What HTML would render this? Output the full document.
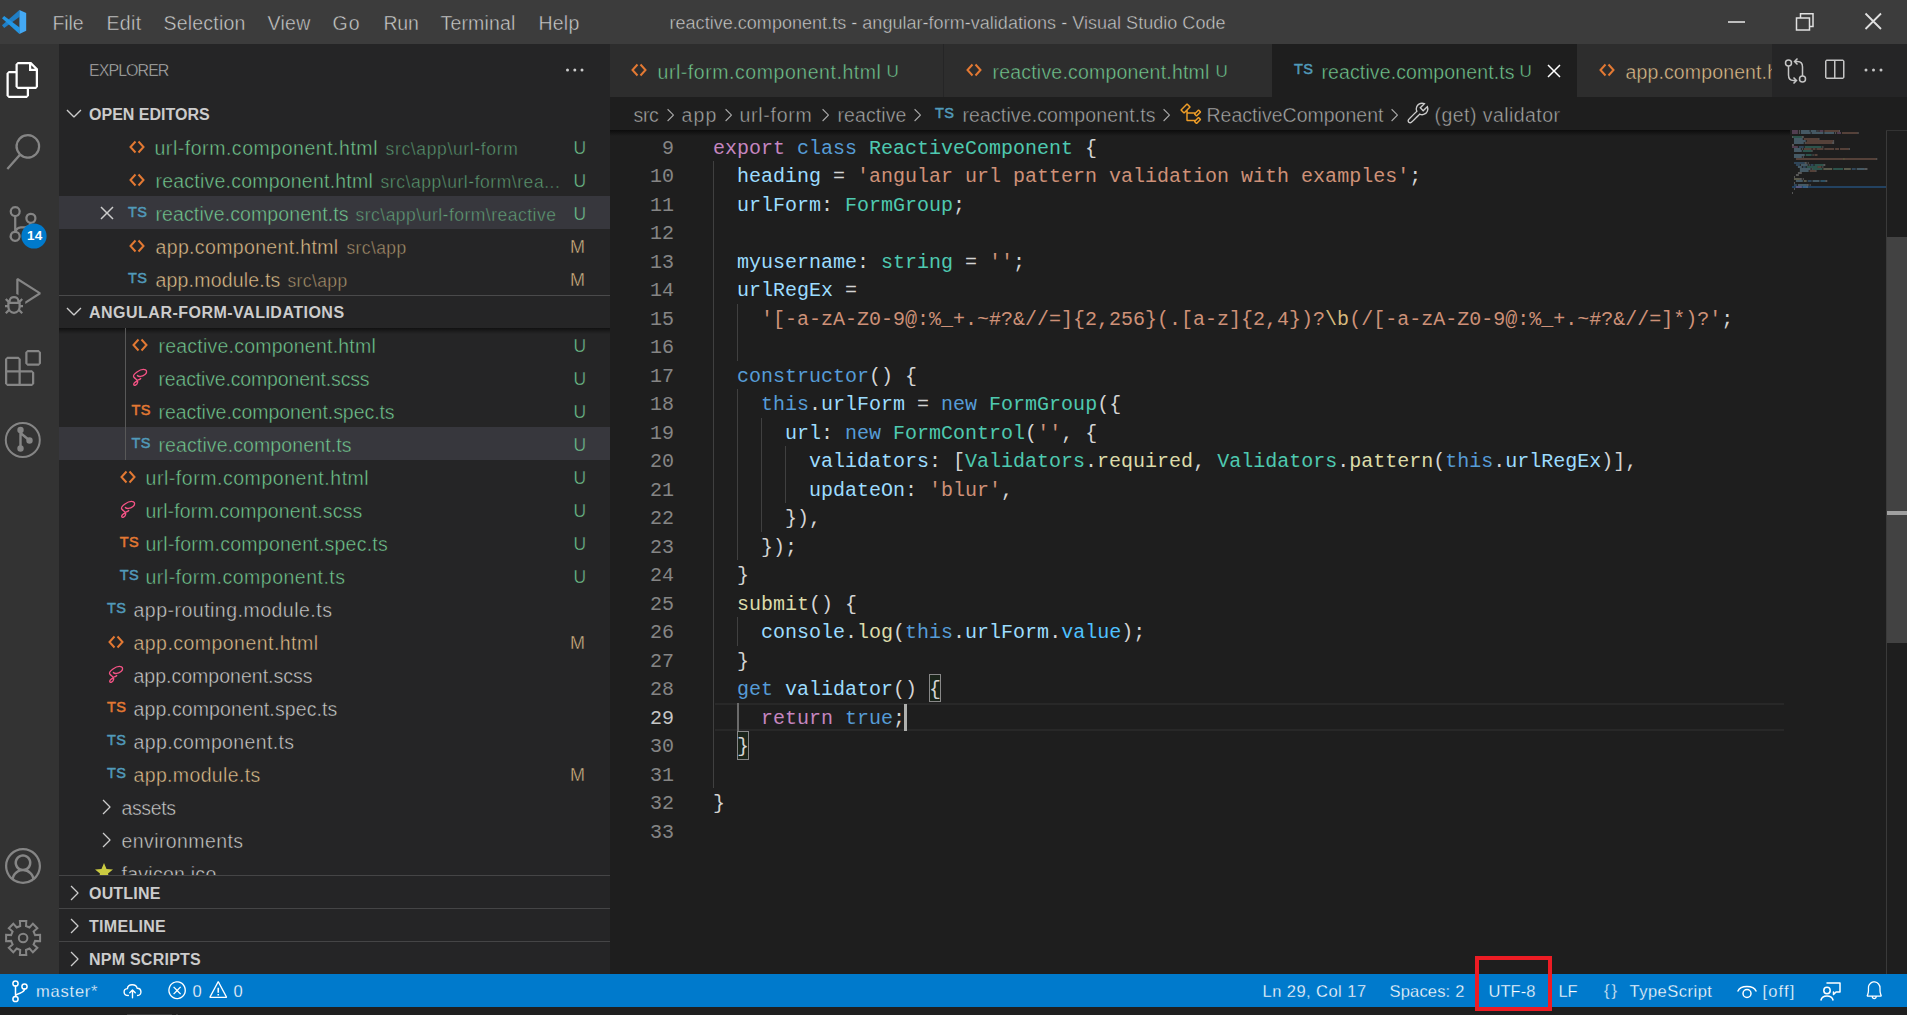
<!DOCTYPE html>
<html lang="en"><head><meta charset="utf-8"><title>reactive.component.ts - angular-form-validations - Visual Studio Code</title>
<style>
*{box-sizing:border-box;margin:0;padding:0}
html,body{width:1907px;height:1015px;overflow:hidden;background:#1e1e1e}
body{position:relative;font-family:"Liberation Sans",sans-serif;color:#ccc}
.abs{position:absolute}
.t{position:absolute;white-space:nowrap;display:block}
.code{position:absolute;left:713px;white-space:pre;font-family:"Liberation Mono",monospace;font-size:20px;line-height:28.5px;height:28.5px;color:#d4d4d4}
.ln{position:absolute;left:610px;width:64px;text-align:right;font-family:"Liberation Mono",monospace;font-size:20px;line-height:28.5px;height:28.5px;color:#858585}
.kc{color:#c586c0}.k{color:#569cd6}.c{color:#4ec9b0}.v{color:#9cdcfe}.f{color:#dcdcaa}.s{color:#ce9178}.e{color:#d7ba7d}.o{color:#4fc1ff}
.g{position:absolute;width:1px;background:#404040}
svg{position:absolute;overflow:visible}
</style></head><body>
<div class="abs" style="left:0px;top:0px;width:1907px;height:44px;background:#3c3c3c;"></div>
<div class="abs" style="left:0px;top:44px;width:59px;height:930px;background:#333333;"></div>
<div class="abs" style="left:59px;top:44px;width:551px;height:930px;background:#252526;"></div>
<div class="abs" style="left:610px;top:44px;width:1297px;height:53px;background:#252526;"></div>
<div class="abs" style="left:610px;top:97px;width:1297px;height:877px;background:#1e1e1e;"></div>
<div class="abs" style="left:0px;top:974px;width:1907px;height:33px;background:#007acc;"></div>
<div class="abs" style="left:0px;top:1007px;width:1907px;height:8px;background:#1f1f1f;"></div>
<svg style="left:2px;top:10px" width="24.200" height="24" viewBox="0 0 100 100" preserveAspectRatio="none">
<path d="M0 64 L72 0 L73 28 L9 75.500 Z" fill="#1f7ec6"/>
<path d="M0 34 L9 24.500 L73 72.500 L72 100 Z" fill="#2396e4"/>
<path d="M72 0 L100 13 V86 L72 100 Z" fill="#44a9f5"/>
</svg>
<span class="t" style="left:52.5px;top:10.7px;font-size:19.5px;line-height:25px;color:#cccccc;letter-spacing:-0.11px;-webkit-text-stroke:0.45px #3c3c3c;">File</span>
<span class="t" style="left:106.5px;top:10.7px;font-size:19.5px;line-height:25px;color:#cccccc;letter-spacing:0.35px;-webkit-text-stroke:0.45px #3c3c3c;">Edit</span>
<span class="t" style="left:163.5px;top:10.7px;font-size:19.5px;line-height:25px;color:#cccccc;letter-spacing:0.20px;-webkit-text-stroke:0.45px #3c3c3c;">Selection</span>
<span class="t" style="left:267.5px;top:10.7px;font-size:19.5px;line-height:25px;color:#cccccc;letter-spacing:0.27px;-webkit-text-stroke:0.45px #3c3c3c;">View</span>
<span class="t" style="left:332.5px;top:10.7px;font-size:19.5px;line-height:25px;color:#cccccc;letter-spacing:0.99px;-webkit-text-stroke:0.45px #3c3c3c;">Go</span>
<span class="t" style="left:383.5px;top:10.7px;font-size:19.5px;line-height:25px;color:#cccccc;letter-spacing:-0.26px;-webkit-text-stroke:0.45px #3c3c3c;">Run</span>
<span class="t" style="left:440.5px;top:10.7px;font-size:19.5px;line-height:25px;color:#cccccc;letter-spacing:0.16px;-webkit-text-stroke:0.45px #3c3c3c;">Terminal</span>
<span class="t" style="left:538.5px;top:10.7px;font-size:19.5px;line-height:25px;color:#cccccc;letter-spacing:0.22px;-webkit-text-stroke:0.45px #3c3c3c;">Help</span>
<span class="t" style="left:669.5px;top:11.5px;font-size:18px;line-height:23px;color:#cccccc;letter-spacing:0.03px;-webkit-text-stroke:0.45px #3c3c3c;">reactive.component.ts - angular-form-validations - Visual Studio Code</span>
<svg style="left:1720px;top:8px" width="170" height="30" viewBox="0 0 170 30" fill="none" stroke="#e0e0e0" stroke-width="1.6">
<path d="M8 14 H25"/>
<path d="M76.500 10 H89.500 V22 H76.500 Z M80.500 10 V5.700 H93 V18.500 H89.500" stroke-width="1.500"/>
<path d="M145.500 5.500 L161 21 M161 5.500 L145.500 21" stroke-width="1.8"/>
</svg>
<svg style="left:4.8px;top:61.8px" width="36" height="36" viewBox="0 0 24 24" fill="#ffffff"><path d="M17.500 0h-9L7 1.500V6H2.500L1 7.500v15.070L2.500 24h12.070L16 22.570V18h4.700l1.300-1.430V4.500L17.500 0zm0 2.120l2.380 2.380H17.500V2.120zm-3 20.380h-12v-15H7v9.070L8.500 18h6v4.500zm6-6h-12v-15H16V6h4.500v10.500z"/></svg>
<svg style="left:4.8px;top:134.1px" width="36" height="36" viewBox="0 0 24 24" fill="#858585"><path d="M15.250 0a8.250 8.250 0 0 0-6.180 13.720L1 22.880l1.120 1 8.050-9.120A8.251 8.251 0 1 0 15.250.010V0zm0 15a6.750 6.750 0 1 1 0-13.500 6.750 6.750 0 0 1 0 13.500z"/></svg>
<svg style="left:5.3px;top:205.8px" width="36" height="36" viewBox="0 0 24 24" fill="#858585"><path d="M21.007 8.222A3.738 3.738 0 0 0 15.045 5.200a3.737 3.737 0 0 0 1.156 6.583 2.988 2.988 0 0 1-2.668 1.670h-2.990a4.456 4.456 0 0 0-2.989 1.165V7.400a3.737 3.737 0 1 0-1.494 0v9.117a3.776 3.776 0 1 0 1.816.099 2.990 2.990 0 0 1 2.668-1.667h2.990a4.484 4.484 0 0 0 4.223-3.039 3.736 3.736 0 0 0 3.250-3.687zM4.565 3.738a2.242 2.242 0 1 1 4.484 0 2.242 2.242 0 0 1-4.484 0zm4.484 16.441a2.242 2.242 0 1 1-4.484 0 2.242 2.242 0 0 1 4.484 0zm8.221-9.715a2.242 2.242 0 1 1 0-4.485 2.242 2.242 0 0 1 0 4.485z"/></svg>
<svg style="left:5.3px;top:277.8px" width="36" height="36" viewBox="0 0 24 24" fill="#858585"><path d="M10.940 13.500l-1.320 1.320a3.730 3.730 0 0 0-7.240 0L1.060 13.500 0 14.560l1.720 1.720-.220.220V18H0v1.500h1.500v.080c.077.489.214.966.410 1.420L0 22.940 1.060 24l1.650-1.650A4.308 4.308 0 0 0 6 24a4.310 4.310 0 0 0 3.290-1.650L10.940 24 12 22.940 10.090 21c.198-.464.336-.951.410-1.450v-.100H12V18h-1.500v-1.500l-.220-.220L12 14.560l-1.060-1.060zM6 13.500a2.250 2.250 0 0 1 2.250 2.250h-4.500A2.250 2.250 0 0 1 6 13.500zm3 6a3.330 3.330 0 0 1-3 3 3.330 3.330 0 0 1-3-3v-2.250h6v2.250zm14.760-9.900v1.260L13.500 17.370V15.600l8.500-5.370L9 2v9.460a5.070 5.070 0 0 0-1.500-.720V.630L8.640 0l15.120 9.600z"/></svg>
<svg style="left:5.3px;top:349.8px" width="36" height="36" viewBox="0 0 24 24" fill="#858585"><path d="M13.500 1.500L15 0h7.500L24 1.500V9l-1.500 1.500H15L13.500 9V1.500zm1.500 0V9h7.500V1.500H15zM0 15V6l1.500-1.500H9L10.500 6v7.500H18l1.500 1.500v7.500L18 24H1.500L0 22.500V15zm9-1.500V6H1.500v7.500H9zM9 15H1.500v7.500H9V15zm1.500 7.500H18V15h-7.500v7.500z"/></svg>
<svg style="left:5.2px;top:848px" width="36" height="36" viewBox="0 0 16 16" fill="#858585"><path d="M16 7.992C16 3.580 12.416 0 8 0S0 3.580 0 7.992c0 2.430 1.104 4.620 2.832 6.090.016.016.032.016.032.032.144.112.288.224.448.336.080.048.144.111.224.175A7.980 7.980 0 0 0 8.016 16a7.980 7.980 0 0 0 4.480-1.375c.080-.48.144-.111.224-.160.144-.111.304-.223.448-.335.016-.16.032-.16.032-.032 1.696-1.487 2.800-3.676 2.800-6.106zm-8 7.001c-1.504 0-2.880-.480-4.016-1.279.016-.128.048-.255.080-.383a4.170 4.170 0 0 1 .416-.991c.176-.304.384-.576.640-.816.240-.240.528-.463.816-.639.304-.176.624-.304.976-.400A4.150 4.150 0 0 1 8 10.342a4.185 4.185 0 0 1 2.928 1.166c.368.368.656.800.864 1.295.112.288.192.592.240.911A7.030 7.030 0 0 1 8 14.993zm-2.448-7.400a2.490 2.490 0 0 1-.208-1.024c0-.351.064-.703.208-1.023.144-.320.336-.607.576-.847.240-.240.528-.431.848-.575.320-.144.672-.208 1.024-.208.368 0 .704.064 1.024.208.320.144.608.336.848.575.240.240.432.528.576.847.144.320.208.672.208 1.023 0 .368-.064.704-.208 1.023a2.840 2.840 0 0 1-.576.848 2.840 2.840 0 0 1-.848.575 2.715 2.715 0 0 1-2.064 0 2.840 2.840 0 0 1-.848-.575 2.526 2.526 0 0 1-.560-.848zm7.424 5.306c0-.032-.016-.048-.016-.080a5.220 5.220 0 0 0-.688-1.406 4.883 4.883 0 0 0-1.088-1.135 5.207 5.207 0 0 0-1.040-.608 2.820 2.820 0 0 0 .464-.383 4.200 4.200 0 0 0 .624-.784 3.624 3.624 0 0 0 .528-1.934 3.710 3.710 0 0 0-.288-1.470 3.799 3.799 0 0 0-.816-1.199 3.845 3.845 0 0 0-1.200-.800 3.720 3.720 0 0 0-1.472-.287 3.720 3.720 0 0 0-1.472.288 3.631 3.631 0 0 0-1.200.815 3.840 3.840 0 0 0-.800 1.199 3.710 3.710 0 0 0-.288 1.470c0 .352.048.688.144 1.007.096.336.224.640.400.927.160.288.384.544.624.784.144.144.304.271.480.383a5.120 5.120 0 0 0-1.040.624c-.416.320-.784.703-1.088 1.119a4.999 4.999 0 0 0-.688 1.406c-.16.032-.16.064-.16.080C1.776 11.636.992 9.910.992 7.992.992 4.140 4.144.991 8 .991s7.008 3.149 7.008 7.001a6.960 6.960 0 0 1-2.032 4.907z"/></svg>
<svg style="left:0;top:0" width="59" height="974" viewBox="0 0 59 974" fill="none" stroke-linejoin="round" stroke-linecap="round">
<g stroke="#858585" stroke-width="2">
<circle cx="22.800" cy="440" r="17"/>
<path d="M20.500 430 V448 M20.500 433 L29 440" stroke-width="2.400"/>
<circle cx="23.100" cy="938" r="4.300"/>
<path d="M20.2 926.0 L19.9 921.0 L26.3 921.0 L26.0 926.0 L29.5 927.5 L32.9 923.7 L37.4 928.2 L33.6 931.6 L35.1 935.1 L40.1 934.8 L40.1 941.2 L35.1 940.9 L33.6 944.4 L37.4 947.8 L32.9 952.3 L29.5 948.5 L26.0 950.0 L26.3 955.0 L19.9 955.0 L20.2 950.0 L16.7 948.5 L13.3 952.3 L8.8 947.8 L12.6 944.4 L11.1 940.9 L6.1 941.2 L6.1 934.8 L11.1 935.1 L12.6 931.6 L8.8 928.2 L13.3 923.7 L16.7 927.5 Z" stroke-linejoin="miter"/>
</g>
<g fill="#858585" stroke="none">
<circle cx="20.500" cy="430" r="3.200"/><circle cx="20.500" cy="448.500" r="3.200"/><circle cx="29.500" cy="440.500" r="3.200"/>
</g>
<circle cx="34" cy="236" r="12.600" fill="#007acc"/>
</svg>
<span class="t" style="left:27.0px;top:227.1px;font-size:13.5px;line-height:18px;color:#ffffff;font-weight:700;letter-spacing:0.23px;">14</span>
<span class="t" style="left:89.0px;top:60.4px;font-size:16px;line-height:21px;color:#bbbbbb;letter-spacing:-0.96px;-webkit-text-stroke:0.45px #252526;">EXPLORER</span>
<svg style="left:565px;top:67px" width="20" height="6" viewBox="0 0 20 6" fill="#cccccc"><circle cx="2.500" cy="3" r="1.500"/><circle cx="9.800" cy="3" r="1.500"/><circle cx="17" cy="3" r="1.500"/></svg>
<svg style="left:61.5px;top:101.0px" width="24" height="24" viewBox="0 0 16 16" fill="#cccccc"><path d="M7.976 10.072l4.357-4.357.620.618L8.284 11h-.618L3 6.333l.619-.618 4.357 4.357z"/></svg>
<span class="t" style="left:89.0px;top:104.4px;font-size:16px;line-height:21px;color:#cccccc;font-weight:700;letter-spacing:0.01px;">OPEN EDITORS</span>
<div class="abs" style="left:59px;top:196px;width:551px;height:33px;background:#37373d;"></div>
<svg style="left:128.5px;top:139.5px" width="16" height="14" viewBox="0 0 16 14" fill="none" stroke="#e37933" stroke-width="2"><path d="M6.500 1.500 L1.500 7 L6.500 12.500 M9.500 1.500 L14.500 7 L9.500 12.500"/></svg>
<span class="t" style="left:154.5px;top:135.7px;font-size:19.5px;line-height:25px;color:#73c991;letter-spacing:0.53px;-webkit-text-stroke:0.45px #252526;">url-form.component.html</span>
<span class="t" style="left:385.5px;top:137.5px;font-size:17.5px;line-height:23px;color:#73c991;letter-spacing:0.65px;-webkit-text-stroke:0.45px #252526;opacity:.72;">src\app\url-form</span>
<span class="t" style="left:573.5px;top:136.5px;font-size:17.5px;line-height:23px;color:#73c991;letter-spacing:-0.14px;-webkit-text-stroke:0.45px #252526;">U</span>
<svg style="left:128.5px;top:172.5px" width="16" height="14" viewBox="0 0 16 14" fill="none" stroke="#e37933" stroke-width="2"><path d="M6.500 1.500 L1.500 7 L6.500 12.500 M9.500 1.500 L14.500 7 L9.500 12.500"/></svg>
<span class="t" style="left:155.5px;top:168.7px;font-size:19.5px;line-height:25px;color:#73c991;letter-spacing:0.22px;-webkit-text-stroke:0.45px #252526;">reactive.component.html</span>
<span class="t" style="left:380.5px;top:170.5px;font-size:17.5px;line-height:23px;color:#73c991;letter-spacing:0.55px;-webkit-text-stroke:0.45px #252526;opacity:.72;">src\app\url-form\rea...</span>
<span class="t" style="left:573.5px;top:169.5px;font-size:17.5px;line-height:23px;color:#73c991;letter-spacing:-0.14px;-webkit-text-stroke:0.45px #252526;">U</span>
<span class="t" style="left:128.0px;top:203.2px;font-size:14.5px;line-height:19px;color:#519aba;letter-spacing:0.48px;-webkit-text-stroke:0.5px #519aba;">TS</span>
<span class="t" style="left:155.5px;top:201.7px;font-size:19.5px;line-height:25px;color:#73c991;letter-spacing:0.11px;-webkit-text-stroke:0.45px #37373d;">reactive.component.ts</span>
<span class="t" style="left:355.5px;top:203.5px;font-size:17.5px;line-height:23px;color:#73c991;letter-spacing:0.49px;-webkit-text-stroke:0.45px #37373d;opacity:.72;">src\app\url-form\reactive</span>
<span class="t" style="left:573.5px;top:202.5px;font-size:17.5px;line-height:23px;color:#73c991;letter-spacing:-0.14px;-webkit-text-stroke:0.45px #37373d;">U</span>
<svg style="left:128.5px;top:238.5px" width="16" height="14" viewBox="0 0 16 14" fill="none" stroke="#e37933" stroke-width="2"><path d="M6.500 1.500 L1.500 7 L6.500 12.500 M9.500 1.500 L14.500 7 L9.500 12.500"/></svg>
<span class="t" style="left:155.5px;top:234.7px;font-size:19.5px;line-height:25px;color:#e2c08d;letter-spacing:0.35px;-webkit-text-stroke:0.45px #252526;">app.component.html</span>
<span class="t" style="left:346.5px;top:236.5px;font-size:17.5px;line-height:23px;color:#e2c08d;letter-spacing:0.37px;-webkit-text-stroke:0.45px #252526;opacity:.72;">src\app</span>
<span class="t" style="left:570.0px;top:235.5px;font-size:18px;line-height:23px;color:#e2c08d;letter-spacing:1.50px;-webkit-text-stroke:0.45px #252526;">M</span>
<span class="t" style="left:128.0px;top:269.2px;font-size:14.5px;line-height:19px;color:#519aba;letter-spacing:0.48px;-webkit-text-stroke:0.5px #519aba;">TS</span>
<span class="t" style="left:155.5px;top:267.7px;font-size:19.5px;line-height:25px;color:#e2c08d;letter-spacing:0.19px;-webkit-text-stroke:0.45px #252526;">app.module.ts</span>
<span class="t" style="left:287.5px;top:269.5px;font-size:17.5px;line-height:23px;color:#e2c08d;letter-spacing:0.37px;-webkit-text-stroke:0.45px #252526;opacity:.72;">src\app</span>
<span class="t" style="left:570.0px;top:268.5px;font-size:18px;line-height:23px;color:#e2c08d;letter-spacing:1.50px;-webkit-text-stroke:0.45px #252526;">M</span>
<svg style="left:95px;top:200.5px" width="24" height="24" viewBox="0 0 16 16" fill="#cccccc"><path d="M8 8.707l3.646 3.647.708-.707L8.707 8l3.647-3.646-.707-.708L8 7.293 4.354 3.646l-.707.708L7.293 8l-3.646 3.646.707.708L8 8.707z"/></svg>
<div class="abs" style="left:59px;top:295px;width:551px;height:1px;background:#4a4a4b;"></div>
<svg style="left:61.5px;top:299.0px" width="24" height="24" viewBox="0 0 16 16" fill="#cccccc"><path d="M7.976 10.072l4.357-4.357.620.618L8.284 11h-.618L3 6.333l.619-.618 4.357 4.357z"/></svg>
<span class="t" style="left:89.0px;top:302.4px;font-size:16px;line-height:21px;color:#cccccc;font-weight:700;letter-spacing:0.49px;">ANGULAR-FORM-VALIDATIONS</span>
<div class="abs" style="left:59px;top:328px;width:551px;height:6px;background:linear-gradient(#000000 0,rgba(0,0,0,0) 100%);opacity:.55"></div>
<div class="abs" style="left:59px;top:427px;width:551px;height:33px;background:#37373d;"></div>
<div class="abs" style="left:125px;top:328px;width:1px;height:132px;background:#585858;"></div>
<div class="abs" style="left:59px;top:328px;width:551px;height:548px;overflow:hidden"><div class="abs" style="left:-59px;top:-328px;width:1907px;height:1015px">
<svg style="left:131.5px;top:337.5px" width="16" height="14" viewBox="0 0 16 14" fill="none" stroke="#e37933" stroke-width="2"><path d="M6.500 1.500 L1.500 7 L6.500 12.500 M9.500 1.500 L14.500 7 L9.500 12.500"/></svg>
<span class="t" style="left:158.5px;top:333.7px;font-size:19.5px;line-height:25px;color:#73c991;letter-spacing:0.22px;-webkit-text-stroke:0.45px #252526;">reactive.component.html</span>
<span class="t" style="left:573.5px;top:334.5px;font-size:17.5px;line-height:23px;color:#73c991;letter-spacing:-0.14px;-webkit-text-stroke:0.45px #252526;">U</span>
<svg style="left:132.8px;top:368.9px" width="14" height="18" viewBox="0 0 14 18" fill="none" stroke="#f55385" stroke-width="1.350" stroke-linecap="round"><path d="M4.400 6.500 C5.500 8 9 7.800 12 5.500 C14 4 14 1.500 12.500 0.800 C10.500 0 7 0.800 4 3 C1 5.200 -0.300 6.500 0.800 8 C1.800 9.300 3.500 10.300 4.200 11.200 C5 12.300 4.800 13.500 4 14.800 C3 16.300 1.200 16.800 0.800 15.800 C0.400 14.800 2 13 4.200 11.800 M5.400 10.900 C6.300 10.600 7.200 10.100 7.700 9.500"/></svg>
<span class="t" style="left:158.5px;top:366.7px;font-size:19.5px;line-height:25px;color:#73c991;letter-spacing:-0.16px;-webkit-text-stroke:0.45px #252526;">reactive.component.scss</span>
<span class="t" style="left:573.5px;top:367.5px;font-size:17.5px;line-height:23px;color:#73c991;letter-spacing:-0.14px;-webkit-text-stroke:0.45px #252526;">U</span>
<span class="t" style="left:131.5px;top:401.2px;font-size:14.5px;line-height:19px;color:#e37933;letter-spacing:0.48px;-webkit-text-stroke:0.5px #e37933;">TS</span>
<span class="t" style="left:158.5px;top:399.7px;font-size:19.5px;line-height:25px;color:#73c991;letter-spacing:-0.05px;-webkit-text-stroke:0.45px #252526;">reactive.component.spec.ts</span>
<span class="t" style="left:573.5px;top:400.5px;font-size:17.5px;line-height:23px;color:#73c991;letter-spacing:-0.14px;-webkit-text-stroke:0.45px #252526;">U</span>
<span class="t" style="left:131.5px;top:434.2px;font-size:14.5px;line-height:19px;color:#519aba;letter-spacing:0.48px;-webkit-text-stroke:0.5px #519aba;">TS</span>
<span class="t" style="left:158.5px;top:432.7px;font-size:19.5px;line-height:25px;color:#73c991;letter-spacing:0.11px;-webkit-text-stroke:0.45px #37373d;">reactive.component.ts</span>
<span class="t" style="left:573.5px;top:433.5px;font-size:17.5px;line-height:23px;color:#73c991;letter-spacing:-0.14px;-webkit-text-stroke:0.45px #37373d;">U</span>
<svg style="left:119.7px;top:469.5px" width="16" height="14" viewBox="0 0 16 14" fill="none" stroke="#e37933" stroke-width="2"><path d="M6.500 1.500 L1.500 7 L6.500 12.500 M9.500 1.500 L14.500 7 L9.500 12.500"/></svg>
<span class="t" style="left:145.5px;top:465.7px;font-size:19.5px;line-height:25px;color:#73c991;letter-spacing:0.54px;-webkit-text-stroke:0.45px #252526;">url-form.component.html</span>
<span class="t" style="left:573.5px;top:466.5px;font-size:17.5px;line-height:23px;color:#73c991;letter-spacing:-0.14px;-webkit-text-stroke:0.45px #252526;">U</span>
<svg style="left:121.0px;top:500.9px" width="14" height="18" viewBox="0 0 14 18" fill="none" stroke="#f55385" stroke-width="1.350" stroke-linecap="round"><path d="M4.400 6.500 C5.500 8 9 7.800 12 5.500 C14 4 14 1.500 12.500 0.800 C10.500 0 7 0.800 4 3 C1 5.200 -0.300 6.500 0.800 8 C1.800 9.300 3.500 10.300 4.200 11.200 C5 12.300 4.800 13.500 4 14.800 C3 16.300 1.200 16.800 0.800 15.800 C0.400 14.800 2 13 4.200 11.800 M5.400 10.900 C6.300 10.600 7.200 10.100 7.700 9.500"/></svg>
<span class="t" style="left:145.5px;top:498.7px;font-size:19.5px;line-height:25px;color:#73c991;letter-spacing:0.15px;-webkit-text-stroke:0.45px #252526;">url-form.component.scss</span>
<span class="t" style="left:573.5px;top:499.5px;font-size:17.5px;line-height:23px;color:#73c991;letter-spacing:-0.14px;-webkit-text-stroke:0.45px #252526;">U</span>
<span class="t" style="left:119.7px;top:533.2px;font-size:14.5px;line-height:19px;color:#e37933;letter-spacing:0.48px;-webkit-text-stroke:0.5px #e37933;">TS</span>
<span class="t" style="left:145.5px;top:531.7px;font-size:19.5px;line-height:25px;color:#73c991;letter-spacing:0.24px;-webkit-text-stroke:0.45px #252526;">url-form.component.spec.ts</span>
<span class="t" style="left:573.5px;top:532.5px;font-size:17.5px;line-height:23px;color:#73c991;letter-spacing:-0.14px;-webkit-text-stroke:0.45px #252526;">U</span>
<span class="t" style="left:119.7px;top:566.2px;font-size:14.5px;line-height:19px;color:#519aba;letter-spacing:0.48px;-webkit-text-stroke:0.5px #519aba;">TS</span>
<span class="t" style="left:145.5px;top:564.7px;font-size:19.5px;line-height:25px;color:#73c991;letter-spacing:0.49px;-webkit-text-stroke:0.45px #252526;">url-form.component.ts</span>
<span class="t" style="left:573.5px;top:565.5px;font-size:17.5px;line-height:23px;color:#73c991;letter-spacing:-0.14px;-webkit-text-stroke:0.45px #252526;">U</span>
<span class="t" style="left:107.0px;top:599.2px;font-size:14.5px;line-height:19px;color:#519aba;letter-spacing:0.48px;-webkit-text-stroke:0.5px #519aba;">TS</span>
<span class="t" style="left:133.5px;top:597.7px;font-size:19.5px;line-height:25px;color:#cccccc;letter-spacing:0.49px;-webkit-text-stroke:0.45px #252526;">app-routing.module.ts</span>
<svg style="left:107.5px;top:634.5px" width="16" height="14" viewBox="0 0 16 14" fill="none" stroke="#e37933" stroke-width="2"><path d="M6.500 1.500 L1.500 7 L6.500 12.500 M9.500 1.500 L14.500 7 L9.500 12.500"/></svg>
<span class="t" style="left:133.5px;top:630.7px;font-size:19.5px;line-height:25px;color:#e2c08d;letter-spacing:0.46px;-webkit-text-stroke:0.45px #252526;">app.component.html</span>
<span class="t" style="left:570.0px;top:631.5px;font-size:18px;line-height:23px;color:#e2c08d;letter-spacing:1.50px;-webkit-text-stroke:0.45px #252526;">M</span>
<svg style="left:108.8px;top:665.9px" width="14" height="18" viewBox="0 0 14 18" fill="none" stroke="#f55385" stroke-width="1.350" stroke-linecap="round"><path d="M4.400 6.500 C5.500 8 9 7.800 12 5.500 C14 4 14 1.500 12.500 0.800 C10.500 0 7 0.800 4 3 C1 5.200 -0.300 6.500 0.800 8 C1.800 9.300 3.500 10.300 4.200 11.200 C5 12.300 4.800 13.500 4 14.800 C3 16.300 1.200 16.800 0.800 15.800 C0.400 14.800 2 13 4.200 11.800 M5.400 10.900 C6.300 10.600 7.200 10.100 7.700 9.500"/></svg>
<span class="t" style="left:133.5px;top:663.7px;font-size:19.5px;line-height:25px;color:#cccccc;letter-spacing:0.01px;-webkit-text-stroke:0.45px #252526;">app.component.scss</span>
<span class="t" style="left:107.0px;top:698.2px;font-size:14.5px;line-height:19px;color:#e37933;letter-spacing:0.48px;-webkit-text-stroke:0.5px #e37933;">TS</span>
<span class="t" style="left:133.5px;top:696.7px;font-size:19.5px;line-height:25px;color:#cccccc;letter-spacing:0.11px;-webkit-text-stroke:0.45px #252526;">app.component.spec.ts</span>
<span class="t" style="left:107.0px;top:731.2px;font-size:14.5px;line-height:19px;color:#519aba;letter-spacing:0.48px;-webkit-text-stroke:0.5px #519aba;">TS</span>
<span class="t" style="left:133.5px;top:729.7px;font-size:19.5px;line-height:25px;color:#cccccc;letter-spacing:0.37px;-webkit-text-stroke:0.45px #252526;">app.component.ts</span>
<span class="t" style="left:107.0px;top:764.2px;font-size:14.5px;line-height:19px;color:#519aba;letter-spacing:0.48px;-webkit-text-stroke:0.5px #519aba;">TS</span>
<span class="t" style="left:133.5px;top:762.7px;font-size:19.5px;line-height:25px;color:#e2c08d;letter-spacing:0.35px;-webkit-text-stroke:0.45px #252526;">app.module.ts</span>
<span class="t" style="left:570.0px;top:763.5px;font-size:18px;line-height:23px;color:#e2c08d;letter-spacing:1.50px;-webkit-text-stroke:0.45px #252526;">M</span>
<svg style="left:93.5px;top:794.5px" width="24" height="24" viewBox="0 0 16 16" fill="#cccccc"><path d="M10.072 8.024L5.715 3.667l.618-.620L11 7.716v.618L6.333 13l-.618-.619 4.357-4.357z"/></svg>
<span class="t" style="left:121.5px;top:795.7px;font-size:19.5px;line-height:25px;color:#cccccc;letter-spacing:-0.39px;-webkit-text-stroke:0.45px #252526;">assets</span>
<svg style="left:93.5px;top:827.5px" width="24" height="24" viewBox="0 0 16 16" fill="#cccccc"><path d="M10.072 8.024L5.715 3.667l.618-.620L11 7.716v.618L6.333 13l-.618-.619 4.357-4.357z"/></svg>
<span class="t" style="left:121.5px;top:828.7px;font-size:19.5px;line-height:25px;color:#cccccc;letter-spacing:0.41px;-webkit-text-stroke:0.45px #252526;">environments</span>
<svg style="left:95px;top:862.5px" width="18" height="17" viewBox="0 0 18 17" fill="#cbcb41"><path d="M9 0 L11.500 6 L18 6.500 L13 10.500 L14.500 17 L9 13.500 L3.500 17 L5 10.500 L0 6.500 L6.500 6 Z"/></svg>
<span class="t" style="left:121.5px;top:861.7px;font-size:19.5px;line-height:25px;color:#cccccc;letter-spacing:0.26px;-webkit-text-stroke:0.45px #252526;">favicon.ico</span>
</div></div>
<div class="abs" style="left:59px;top:875px;width:551px;height:1px;background:#454546;"></div>
<div class="abs" style="left:59px;top:876px;width:551px;height:32px;background:#252526;"></div>
<svg style="left:61.5px;top:880.5px" width="24" height="24" viewBox="0 0 16 16" fill="#cccccc"><path d="M10.072 8.024L5.715 3.667l.618-.620L11 7.716v.618L6.333 13l-.618-.619 4.357-4.357z"/></svg>
<span class="t" style="left:89.0px;top:883.4px;font-size:16px;line-height:21px;color:#cccccc;font-weight:700;letter-spacing:0.18px;">OUTLINE</span>
<div class="abs" style="left:59px;top:908px;width:551px;height:1px;background:#454546;"></div>
<div class="abs" style="left:59px;top:909px;width:551px;height:32px;background:#252526;"></div>
<svg style="left:61.5px;top:913.5px" width="24" height="24" viewBox="0 0 16 16" fill="#cccccc"><path d="M10.072 8.024L5.715 3.667l.618-.620L11 7.716v.618L6.333 13l-.618-.619 4.357-4.357z"/></svg>
<span class="t" style="left:89.0px;top:916.4px;font-size:16px;line-height:21px;color:#cccccc;font-weight:700;letter-spacing:0.29px;">TIMELINE</span>
<div class="abs" style="left:59px;top:941px;width:551px;height:1px;background:#454546;"></div>
<div class="abs" style="left:59px;top:942px;width:551px;height:32px;background:#252526;"></div>
<svg style="left:61.5px;top:946.5px" width="24" height="24" viewBox="0 0 16 16" fill="#cccccc"><path d="M10.072 8.024L5.715 3.667l.618-.620L11 7.716v.618L6.333 13l-.618-.619 4.357-4.357z"/></svg>
<span class="t" style="left:89.0px;top:949.4px;font-size:16px;line-height:21px;color:#cccccc;font-weight:700;letter-spacing:0.24px;">NPM SCRIPTS</span>
<div class="abs" style="left:610px;top:44px;width:333px;height:53px;background:#2d2d2d;"></div>
<div class="abs" style="left:943px;top:44px;width:1px;height:53px;background:#252526;"></div>
<div class="abs" style="left:944px;top:44px;width:328px;height:53px;background:#2d2d2d;"></div>
<div class="abs" style="left:1272px;top:44px;width:305px;height:53px;background:#1e1e1e;"></div>
<div class="abs" style="left:1577px;top:44px;width:195px;height:53px;background:#2d2d2d;"></div>
<svg style="left:631px;top:62.5px" width="16" height="14" viewBox="0 0 16 14" fill="none" stroke="#e37933" stroke-width="2"><path d="M6.500 1.500 L1.500 7 L6.500 12.500 M9.500 1.500 L14.500 7 L9.500 12.500"/></svg>
<span class="t" style="left:657.5px;top:59.7px;font-size:19.5px;line-height:25px;color:#73c991;letter-spacing:0.55px;-webkit-text-stroke:0.45px #2d2d2d;">url-form.component.html</span>
<span class="t" style="left:886.5px;top:60.9px;font-size:17px;line-height:22px;color:#73c991;letter-spacing:0.72px;-webkit-text-stroke:0.45px #2d2d2d;">U</span>
<svg style="left:966px;top:62.5px" width="16" height="14" viewBox="0 0 16 14" fill="none" stroke="#e37933" stroke-width="2"><path d="M6.500 1.500 L1.500 7 L6.500 12.500 M9.500 1.500 L14.500 7 L9.500 12.500"/></svg>
<span class="t" style="left:992.5px;top:59.7px;font-size:19.5px;line-height:25px;color:#73c991;letter-spacing:0.20px;-webkit-text-stroke:0.45px #2d2d2d;">reactive.component.html</span>
<span class="t" style="left:1215.5px;top:60.9px;font-size:17px;line-height:22px;color:#73c991;letter-spacing:0.72px;-webkit-text-stroke:0.45px #2d2d2d;">U</span>
<span class="t" style="left:1294.0px;top:60.2px;font-size:14.5px;line-height:19px;color:#519aba;letter-spacing:0.48px;-webkit-text-stroke:0.5px #519aba;">TS</span>
<span class="t" style="left:1321.5px;top:59.7px;font-size:19.5px;line-height:25px;color:#73c991;letter-spacing:0.11px;-webkit-text-stroke:0.45px #1e1e1e;">reactive.component.ts</span>
<span class="t" style="left:1519.5px;top:60.9px;font-size:17px;line-height:22px;color:#73c991;letter-spacing:0.72px;-webkit-text-stroke:0.45px #1e1e1e;">U</span>
<svg style="left:1542px;top:59px" width="24" height="24" viewBox="0 0 16 16" fill="#ffffff"><path d="M8 8.707l3.646 3.647.708-.707L8.707 8l3.647-3.646-.707-.708L8 7.293 4.354 3.646l-.707.708L7.293 8l-3.646 3.646.707.708L8 8.707z"/></svg>
<svg style="left:1599px;top:62.5px" width="16" height="14" viewBox="0 0 16 14" fill="none" stroke="#e37933" stroke-width="2"><path d="M6.500 1.500 L1.500 7 L6.500 12.500 M9.500 1.500 L14.500 7 L9.500 12.500"/></svg>
<div class="abs" style="left:1577px;top:44px;width:195px;height:53px;overflow:hidden">
<span class="t" style="left:48.5px;top:15.7px;font-size:19.5px;line-height:25px;color:#e2c08d;letter-spacing:0.13px;-webkit-text-stroke:0.45px #2d2d2d;">app.component.html</span>
</div>
<svg style="left:1780px;top:55px" width="120" height="32" viewBox="0 0 120 32" fill="none" stroke="#c5c5c5" stroke-width="1.500">
<circle cx="8.500" cy="8" r="3"/><circle cx="22.500" cy="24" r="3"/>
<path d="M8.500 11 V20 C8.500 24 10 25.500 13.500 25.500 H16 M13.500 22.500 L16.500 25.500 L13.500 28.500"/>
<path d="M22.500 21 V12 C22.500 8 21 6.500 17.500 6.500 H15 M17.500 3.500 L14.500 6.500 L17.500 9.500"/>

<g fill="#c5c5c5" stroke="none"><circle cx="86" cy="15" r="1.500"/><circle cx="93.500" cy="15" r="1.500"/><circle cx="101" cy="15" r="1.500"/></g>
</svg>
<svg style="left:1822px;top:57.5px" width="24" height="24" viewBox="0 0 16 16" fill="#c5c5c5"><path d="M14 1H3L2 2v11l1 1h11l1-1V2l-1-1zM8 13H3V2h5v11zm6 0H9V2h5v11z"/></svg>
<span class="t" style="left:633.5px;top:103.2px;font-size:19.5px;line-height:25px;color:#a9a9a9;letter-spacing:-0.33px;-webkit-text-stroke:0.45px #1e1e1e;">src</span>
<svg style="left:660.479px;top:105.12px" width="20.2" height="20.2" viewBox="0 0 16 16" fill="#a9a9a9"><path d="M10.072 8.024L5.715 3.667l.618-.620L11 7.716v.618L6.333 13l-.618-.619 4.357-4.357z"/></svg>
<span class="t" style="left:681.5px;top:103.2px;font-size:19.5px;line-height:25px;color:#a9a9a9;letter-spacing:1.15px;-webkit-text-stroke:0.45px #1e1e1e;">app</span>
<svg style="left:717.979px;top:105.12px" width="20.2" height="20.2" viewBox="0 0 16 16" fill="#a9a9a9"><path d="M10.072 8.024L5.715 3.667l.618-.620L11 7.716v.618L6.333 13l-.618-.619 4.357-4.357z"/></svg>
<span class="t" style="left:739.5px;top:103.2px;font-size:19.5px;line-height:25px;color:#a9a9a9;letter-spacing:0.73px;-webkit-text-stroke:0.45px #1e1e1e;">url-form</span>
<svg style="left:814.979px;top:105.12px" width="20.2" height="20.2" viewBox="0 0 16 16" fill="#a9a9a9"><path d="M10.072 8.024L5.715 3.667l.618-.620L11 7.716v.618L6.333 13l-.618-.619 4.357-4.357z"/></svg>
<span class="t" style="left:837.5px;top:103.2px;font-size:19.5px;line-height:25px;color:#a9a9a9;letter-spacing:0.09px;-webkit-text-stroke:0.45px #1e1e1e;">reactive</span>
<svg style="left:906.979px;top:105.12px" width="20.2" height="20.2" viewBox="0 0 16 16" fill="#a9a9a9"><path d="M10.072 8.024L5.715 3.667l.618-.620L11 7.716v.618L6.333 13l-.618-.619 4.357-4.357z"/></svg>
<span class="t" style="left:935.0px;top:103.7px;font-size:14.5px;line-height:19px;color:#519aba;letter-spacing:0.48px;-webkit-text-stroke:0.5px #519aba;">TS</span>
<span class="t" style="left:962.5px;top:103.2px;font-size:19.5px;line-height:25px;color:#a9a9a9;letter-spacing:0.11px;-webkit-text-stroke:0.45px #1e1e1e;">reactive.component.ts</span>
<svg style="left:1155.979px;top:105.12px" width="20.2" height="20.2" viewBox="0 0 16 16" fill="#a9a9a9"><path d="M10.072 8.024L5.715 3.667l.618-.620L11 7.716v.618L6.333 13l-.618-.619 4.357-4.357z"/></svg>
<svg style="left:1178.7px;top:102.4px" width="24" height="24" viewBox="0 0 16 16" fill="#ee9d28"><path d="M11.340 9.710h.710l2.670-2.670v-.710L13.380 5h-.700l-1.820 1.810h-5V5.560l1.860-1.850V3l-2-2H5L1 5v.710l2 2h.710l1.140-1.150v5.790l.500.500H10v.520l1.330 1.340h.710l2.670-2.670v-.710L13.370 10h-.700l-1.860 1.850h-5v-4H10v.480l1.340 1.380zm1.690-3.650l.630.630-2 2-.630-.630 2-2zm0 5l.630.630-2 2-.630-.630 2-2zM3.350 6.650l-1.290-1.300 3.290-3.290 1.300 1.290-3.300 3.300z"/></svg>
<span class="t" style="left:1206.5px;top:103.2px;font-size:19.5px;line-height:25px;color:#a9a9a9;letter-spacing:0.02px;-webkit-text-stroke:0.45px #1e1e1e;">ReactiveComponent</span>
<svg style="left:1383.979px;top:105.12px" width="20.2" height="20.2" viewBox="0 0 16 16" fill="#a9a9a9"><path d="M10.072 8.024L5.715 3.667l.618-.620L11 7.716v.618L6.333 13l-.618-.619 4.357-4.357z"/></svg>
<svg style="left:1406px;top:101px" width="24" height="24" viewBox="0 0 16 16" fill="#cccccc"><path d="M2.807 14.975a1.750 1.750 0 0 1-1.255-.556 1.684 1.684 0 0 1-.544-1.100A1.720 1.720 0 0 1 1.360 12.100c1.208-1.270 3.587-3.650 5.318-5.345a4.257 4.257 0 0 1 .048-3.078 4.095 4.095 0 0 1 1.665-1.969 4.259 4.259 0 0 1 4.040-.360l.617.268-2.866 2.951 1.255 1.259 2.944-2.877.267.619a4.295 4.295 0 0 1 .040 3.311 4.198 4.198 0 0 1-.923 1.392 4.270 4.270 0 0 1-.743.581 4.217 4.217 0 0 1-3.812.446c-1.098 1.112-3.840 3.872-5.320 5.254a1.630 1.630 0 0 1-1.084.423zm7.938-13.047a3.320 3.320 0 0 0-1.849.557c-.213.130-.412.284-.591.458a3.321 3.321 0 0 0-.657 3.733l.135.297-.233.227c-1.738 1.697-4.269 4.220-5.485 5.504a.805.805 0 0 0 .132 1.050.911.911 0 0 0 .298.220c.100.044.209.069.319.072a.694.694 0 0 0 .450-.181c1.573-1.469 4.612-4.539 5.504-5.440l.230-.232.294.135a3.286 3.286 0 0 0 3.225-.254 3.330 3.330 0 0 0 .591-.464 3.280 3.280 0 0 0 .964-2.358c0-.215-.021-.430-.064-.642L11.430 7.125 8.879 4.578l2.515-2.590a3.286 3.286 0 0 0-.650-.060z"/></svg>
<span class="t" style="left:1434.5px;top:103.2px;font-size:19.5px;line-height:25px;color:#a9a9a9;letter-spacing:0.45px;-webkit-text-stroke:0.45px #1e1e1e;">(get) validator</span>
<div class="abs" style="left:610px;top:130px;width:1180px;height:6px;background:linear-gradient(#000000 0,rgba(0,0,0,0) 100%);opacity:.6"></div>
<div class="abs" style="left:715px;top:703px;width:1069px;height:28px;border-top:2.500px solid #282828;border-bottom:2.500px solid #282828"></div>
<div class="g" style="left:713.0px;top:161.0px;height:627.0px;background:#404040"></div>
<div class="g" style="left:737.0px;top:304.0px;height:57.0px;background:#404040"></div>
<div class="g" style="left:737.0px;top:389.0px;height:171.0px;background:#404040"></div>
<div class="g" style="left:737.0px;top:617.0px;height:29.0px;background:#404040"></div>
<div class="abs" style="left:737px;top:703px;width:2px;height:28px;background:#6a6a6a"></div>
<div class="g" style="left:761.0px;top:418.0px;height:114.0px;background:#404040"></div>
<div class="g" style="left:785.0px;top:446.0px;height:57.0px;background:#404040"></div>
<div class="abs" style="left:929.3px;top:673.8px;width:11.500px;height:28.500px;border:1px solid #888;background:rgba(0,100,0,.1)"></div>
<div class="abs" style="left:737.3px;top:731.0px;width:11.500px;height:28.500px;border:1px solid #888;background:rgba(0,100,0,.1)"></div>
<div class="ln" style="top:135.4px;color:#858585">9</div>
<div class="code" style="top:135.4px"><span class="kc">export</span> <span class="k">class</span> <span class="c">ReactiveComponent</span> {</div>
<div class="ln" style="top:163.4px;color:#858585">10</div>
<div class="code" style="top:163.4px">  <span class="v">heading</span> = <span class="s">'angular url pattern validation with examples'</span>;</div>
<div class="ln" style="top:192.4px;color:#858585">11</div>
<div class="code" style="top:192.4px">  <span class="v">urlForm</span>: <span class="c">FormGroup</span>;</div>
<div class="ln" style="top:220.4px;color:#858585">12</div>
<div class="ln" style="top:249.4px;color:#858585">13</div>
<div class="code" style="top:249.4px">  <span class="v">myusername</span>: <span class="c">string</span> = <span class="s">''</span>;</div>
<div class="ln" style="top:277.4px;color:#858585">14</div>
<div class="code" style="top:277.4px">  <span class="v">urlRegEx</span> =</div>
<div class="ln" style="top:306.4px;color:#858585">15</div>
<div class="code" style="top:306.4px">    <span class="s">'[-a-zA-Z0-9@:%_+.~#?&amp;//=]{2,256}(.[a-z]{2,4})?</span><span class="e">\b</span><span class="s">(/[-a-zA-Z0-9@:%_+.~#?&amp;//=]*)?'</span>;</div>
<div class="ln" style="top:334.4px;color:#858585">16</div>
<div class="ln" style="top:363.4px;color:#858585">17</div>
<div class="code" style="top:363.4px">  <span class="k">constructor</span>() {</div>
<div class="ln" style="top:391.4px;color:#858585">18</div>
<div class="code" style="top:391.4px">    <span class="k">this</span>.<span class="v">urlForm</span> = <span class="k">new</span> <span class="c">FormGroup</span>({</div>
<div class="ln" style="top:420.4px;color:#858585">19</div>
<div class="code" style="top:420.4px">      <span class="v">url</span>: <span class="k">new</span> <span class="c">FormControl</span>(<span class="s">''</span>, {</div>
<div class="ln" style="top:448.4px;color:#858585">20</div>
<div class="code" style="top:448.4px">        <span class="v">validators</span>: [<span class="c">Validators</span>.<span class="f">required</span>, <span class="c">Validators</span>.<span class="f">pattern</span>(<span class="k">this</span>.<span class="v">urlRegEx</span>)],</div>
<div class="ln" style="top:477.4px;color:#858585">21</div>
<div class="code" style="top:477.4px">        <span class="v">updateOn</span>: <span class="s">'blur'</span>,</div>
<div class="ln" style="top:505.4px;color:#858585">22</div>
<div class="code" style="top:505.4px">      }),</div>
<div class="ln" style="top:534.4px;color:#858585">23</div>
<div class="code" style="top:534.4px">    });</div>
<div class="ln" style="top:562.4px;color:#858585">24</div>
<div class="code" style="top:562.4px">  }</div>
<div class="ln" style="top:591.4px;color:#858585">25</div>
<div class="code" style="top:591.4px">  <span class="f">submit</span>() {</div>
<div class="ln" style="top:619.4px;color:#858585">26</div>
<div class="code" style="top:619.4px">    <span class="v">console</span>.<span class="f">log</span>(<span class="k">this</span>.<span class="v">urlForm</span>.<span class="o">value</span>);</div>
<div class="ln" style="top:648.4px;color:#858585">27</div>
<div class="code" style="top:648.4px">  }</div>
<div class="ln" style="top:676.4px;color:#858585">28</div>
<div class="code" style="top:676.4px">  <span class="k">get</span> <span class="v">validator</span>() {</div>
<div class="ln" style="top:705.4px;color:#c6c6c6">29</div>
<div class="code" style="top:705.4px">    <span class="kc">return</span> <span class="k">true</span>;</div>
<div class="ln" style="top:733.4px;color:#858585">30</div>
<div class="code" style="top:733.4px">  }</div>
<div class="ln" style="top:762.4px;color:#858585">31</div>
<div class="ln" style="top:790.4px;color:#858585">32</div>
<div class="code" style="top:790.4px">}</div>
<div class="ln" style="top:819.4px;color:#858585">33</div>
<div class="abs" style="left:904.0px;top:703.500px;width:3px;height:27px;background:#aeafad"></div>
<svg style="left:1792px;top:130px" width="95" height="70" viewBox="0 0 95 70" shape-rendering="auto"><rect x="0" y="56" width="94" height="2" fill="#264f78" opacity=".75"/><rect x="0.00" y="0.3" width="5.88" height="1.400" fill="#c586c0" opacity=".45"/><rect x="6.86" y="0.3" width="0.98" height="1.400" fill="#d4d4d4" opacity=".45"/><rect x="8.82" y="0.3" width="8.82" height="1.400" fill="#9cdcfe" opacity=".45"/><rect x="18.62" y="0.3" width="5.88" height="1.400" fill="#9cdcfe" opacity=".45"/><rect x="25.48" y="0.3" width="0.98" height="1.400" fill="#d4d4d4" opacity=".45"/><rect x="27.44" y="0.3" width="3.92" height="1.400" fill="#c586c0" opacity=".45"/><rect x="32.34" y="0.3" width="14.70" height="1.400" fill="#ce9178" opacity=".45"/><rect x="47.04" y="0.3" width="0.98" height="1.400" fill="#d4d4d4" opacity=".45"/><rect x="0.00" y="2.3" width="5.88" height="1.400" fill="#c586c0" opacity=".45"/><rect x="6.86" y="2.3" width="0.98" height="1.400" fill="#d4d4d4" opacity=".45"/><rect x="8.82" y="2.3" width="9.80" height="1.400" fill="#9cdcfe" opacity=".45"/><rect x="19.60" y="2.3" width="11.76" height="1.400" fill="#9cdcfe" opacity=".45"/><rect x="32.34" y="2.3" width="9.80" height="1.400" fill="#9cdcfe" opacity=".45"/><rect x="43.12" y="2.3" width="0.98" height="1.400" fill="#d4d4d4" opacity=".45"/><rect x="45.08" y="2.3" width="3.92" height="1.400" fill="#c586c0" opacity=".45"/><rect x="49.98" y="2.3" width="15.68" height="1.400" fill="#ce9178" opacity=".45"/><rect x="65.66" y="2.3" width="0.98" height="1.400" fill="#d4d4d4" opacity=".45"/><rect x="0.00" y="6.3" width="0.98" height="1.400" fill="#d4d4d4" opacity=".45"/><rect x="0.98" y="6.3" width="8.82" height="1.400" fill="#4ec9b0" opacity=".45"/><rect x="9.80" y="6.3" width="1.96" height="1.400" fill="#d4d4d4" opacity=".45"/><rect x="1.96" y="8.3" width="8.82" height="1.400" fill="#9cdcfe" opacity=".45"/><rect x="11.76" y="8.3" width="14.70" height="1.400" fill="#ce9178" opacity=".45"/><rect x="26.46" y="8.3" width="0.98" height="1.400" fill="#d4d4d4" opacity=".45"/><rect x="1.96" y="10.3" width="11.76" height="1.400" fill="#9cdcfe" opacity=".45"/><rect x="14.70" y="10.3" width="26.46" height="1.400" fill="#ce9178" opacity=".45"/><rect x="41.16" y="10.3" width="0.98" height="1.400" fill="#d4d4d4" opacity=".45"/><rect x="1.96" y="12.3" width="9.80" height="1.400" fill="#9cdcfe" opacity=".45"/><rect x="12.74" y="12.3" width="0.98" height="1.400" fill="#d4d4d4" opacity=".45"/><rect x="13.72" y="12.3" width="26.46" height="1.400" fill="#ce9178" opacity=".45"/><rect x="40.18" y="12.3" width="1.96" height="1.400" fill="#d4d4d4" opacity=".45"/><rect x="0.00" y="14.3" width="1.96" height="1.400" fill="#d4d4d4" opacity=".45"/><rect x="0.00" y="16.3" width="5.88" height="1.400" fill="#c586c0" opacity=".45"/><rect x="6.86" y="16.3" width="4.90" height="1.400" fill="#569cd6" opacity=".45"/><rect x="12.74" y="16.3" width="16.66" height="1.400" fill="#4ec9b0" opacity=".45"/><rect x="30.38" y="16.3" width="0.98" height="1.400" fill="#d4d4d4" opacity=".45"/><rect x="1.96" y="18.3" width="6.86" height="1.400" fill="#9cdcfe" opacity=".45"/><rect x="9.80" y="18.3" width="0.98" height="1.400" fill="#d4d4d4" opacity=".45"/><rect x="11.76" y="18.3" width="7.84" height="1.400" fill="#ce9178" opacity=".45"/><rect x="20.58" y="18.3" width="2.94" height="1.400" fill="#ce9178" opacity=".45"/><rect x="24.50" y="18.3" width="6.86" height="1.400" fill="#ce9178" opacity=".45"/><rect x="32.34" y="18.3" width="9.80" height="1.400" fill="#ce9178" opacity=".45"/><rect x="43.12" y="18.3" width="3.92" height="1.400" fill="#ce9178" opacity=".45"/><rect x="48.02" y="18.3" width="8.82" height="1.400" fill="#ce9178" opacity=".45"/><rect x="56.84" y="18.3" width="0.98" height="1.400" fill="#d4d4d4" opacity=".45"/><rect x="1.96" y="20.3" width="7.84" height="1.400" fill="#9cdcfe" opacity=".45"/><rect x="10.78" y="20.3" width="8.82" height="1.400" fill="#4ec9b0" opacity=".45"/><rect x="19.60" y="20.3" width="0.98" height="1.400" fill="#d4d4d4" opacity=".45"/><rect x="1.96" y="24.3" width="10.78" height="1.400" fill="#9cdcfe" opacity=".45"/><rect x="13.72" y="24.3" width="5.88" height="1.400" fill="#4ec9b0" opacity=".45"/><rect x="20.58" y="24.3" width="0.98" height="1.400" fill="#d4d4d4" opacity=".45"/><rect x="22.54" y="24.3" width="2.94" height="1.400" fill="#ce9178" opacity=".45"/><rect x="1.96" y="26.3" width="7.84" height="1.400" fill="#9cdcfe" opacity=".45"/><rect x="10.78" y="26.3" width="0.98" height="1.400" fill="#d4d4d4" opacity=".45"/><rect x="3.92" y="28.3" width="47.04" height="1.400" fill="#ce9178" opacity=".45"/><rect x="50.96" y="28.3" width="1.96" height="1.400" fill="#d7ba7d" opacity=".45"/><rect x="52.92" y="28.3" width="31.36" height="1.400" fill="#ce9178" opacity=".45"/><rect x="84.28" y="28.3" width="0.98" height="1.400" fill="#d4d4d4" opacity=".45"/><rect x="1.96" y="32.3" width="10.78" height="1.400" fill="#569cd6" opacity=".45"/><rect x="12.74" y="32.3" width="1.96" height="1.400" fill="#d4d4d4" opacity=".45"/><rect x="15.68" y="32.3" width="0.98" height="1.400" fill="#d4d4d4" opacity=".45"/><rect x="3.92" y="34.3" width="3.92" height="1.400" fill="#569cd6" opacity=".45"/><rect x="8.82" y="34.3" width="6.86" height="1.400" fill="#9cdcfe" opacity=".45"/><rect x="16.66" y="34.3" width="0.98" height="1.400" fill="#d4d4d4" opacity=".45"/><rect x="18.62" y="34.3" width="2.94" height="1.400" fill="#569cd6" opacity=".45"/><rect x="22.54" y="34.3" width="8.82" height="1.400" fill="#4ec9b0" opacity=".45"/><rect x="31.36" y="34.3" width="1.96" height="1.400" fill="#d4d4d4" opacity=".45"/><rect x="5.88" y="36.3" width="3.92" height="1.400" fill="#9cdcfe" opacity=".45"/><rect x="10.78" y="36.3" width="2.94" height="1.400" fill="#569cd6" opacity=".45"/><rect x="14.70" y="36.3" width="10.78" height="1.400" fill="#4ec9b0" opacity=".45"/><rect x="25.48" y="36.3" width="3.92" height="1.400" fill="#ce9178" opacity=".45"/><rect x="30.38" y="36.3" width="0.98" height="1.400" fill="#d4d4d4" opacity=".45"/><rect x="7.84" y="38.3" width="10.78" height="1.400" fill="#9cdcfe" opacity=".45"/><rect x="19.60" y="38.3" width="0.98" height="1.400" fill="#d4d4d4" opacity=".45"/><rect x="20.58" y="38.3" width="9.80" height="1.400" fill="#4ec9b0" opacity=".45"/><rect x="31.36" y="38.3" width="8.82" height="1.400" fill="#dcdcaa" opacity=".45"/><rect x="41.16" y="38.3" width="9.80" height="1.400" fill="#4ec9b0" opacity=".45"/><rect x="51.94" y="38.3" width="6.86" height="1.400" fill="#dcdcaa" opacity=".45"/><rect x="59.78" y="38.3" width="3.92" height="1.400" fill="#569cd6" opacity=".45"/><rect x="64.68" y="38.3" width="7.84" height="1.400" fill="#9cdcfe" opacity=".45"/><rect x="72.52" y="38.3" width="2.94" height="1.400" fill="#d4d4d4" opacity=".45"/><rect x="7.84" y="40.3" width="8.82" height="1.400" fill="#9cdcfe" opacity=".45"/><rect x="17.64" y="40.3" width="5.88" height="1.400" fill="#ce9178" opacity=".45"/><rect x="23.52" y="40.3" width="0.98" height="1.400" fill="#d4d4d4" opacity=".45"/><rect x="5.88" y="42.3" width="3.92" height="1.400" fill="#d4d4d4" opacity=".45"/><rect x="3.92" y="44.3" width="2.94" height="1.400" fill="#d4d4d4" opacity=".45"/><rect x="1.96" y="46.3" width="0.98" height="1.400" fill="#d4d4d4" opacity=".45"/><rect x="1.96" y="48.3" width="5.88" height="1.400" fill="#dcdcaa" opacity=".45"/><rect x="7.84" y="48.3" width="1.96" height="1.400" fill="#d4d4d4" opacity=".45"/><rect x="10.78" y="48.3" width="0.98" height="1.400" fill="#d4d4d4" opacity=".45"/><rect x="3.92" y="50.3" width="6.86" height="1.400" fill="#9cdcfe" opacity=".45"/><rect x="11.76" y="50.3" width="2.94" height="1.400" fill="#dcdcaa" opacity=".45"/><rect x="15.68" y="50.3" width="3.92" height="1.400" fill="#569cd6" opacity=".45"/><rect x="20.58" y="50.3" width="6.86" height="1.400" fill="#9cdcfe" opacity=".45"/><rect x="28.42" y="50.3" width="4.90" height="1.400" fill="#4fc1ff" opacity=".45"/><rect x="33.32" y="50.3" width="1.96" height="1.400" fill="#d4d4d4" opacity=".45"/><rect x="1.96" y="52.3" width="0.98" height="1.400" fill="#d4d4d4" opacity=".45"/><rect x="1.96" y="54.3" width="2.94" height="1.400" fill="#569cd6" opacity=".45"/><rect x="5.88" y="54.3" width="8.82" height="1.400" fill="#9cdcfe" opacity=".45"/><rect x="14.70" y="54.3" width="1.96" height="1.400" fill="#d4d4d4" opacity=".45"/><rect x="17.64" y="54.3" width="0.98" height="1.400" fill="#d4d4d4" opacity=".45"/><rect x="3.92" y="56.3" width="5.88" height="1.400" fill="#c586c0" opacity=".45"/><rect x="10.78" y="56.3" width="3.92" height="1.400" fill="#569cd6" opacity=".45"/><rect x="14.70" y="56.3" width="0.98" height="1.400" fill="#d4d4d4" opacity=".45"/><rect x="1.96" y="58.3" width="0.98" height="1.400" fill="#d4d4d4" opacity=".45"/><rect x="0.00" y="62.3" width="0.98" height="1.400" fill="#d4d4d4" opacity=".45"/></svg>
<div class="abs" style="left:1886px;top:130px;width:1px;height:844px;background:#3a3a3a;"></div>
<div class="abs" style="left:1886px;top:130px;width:21px;height:1px;background:#333333;"></div>
<div class="abs" style="left:1887px;top:237px;width:20px;height:406px;background:#424242;"></div>
<div class="abs" style="left:1887px;top:511px;width:20px;height:4px;background:#a0a0a0;"></div>
<svg style="left:0;top:974px" width="260" height="33" viewBox="0 0 260 33" fill="none" stroke="#ffffff" stroke-width="1.500" stroke-linecap="round" stroke-linejoin="round">
<circle cx="15.500" cy="9.500" r="2.600"/><circle cx="15.500" cy="25" r="2.600"/><circle cx="24.500" cy="12.500" r="2.600"/>
<path d="M15.500 12.100 V22.400 M24.500 15.100 C24.500 19.500 18 18.500 15.500 21.500"/>
<g transform="translate(132.500 16.500) scale(.92) translate(-132.500 -17)"><path d="M128 22.500 C122 22.500 122 15.500 127 15 C127.500 9.500 136.500 9.500 137.500 14.500 C143 14.500 143 22.500 138 22.500 M132.500 25 V16.500 M129.500 19.500 L132.500 16.500 L135.500 19.500"/></g>
</svg>
<svg style="left:167.1px;top:980.2px" width="20.5" height="20.5" viewBox="0 0 16 16" fill="#ffffff"><path d="M8.600 1c1.600.100 3.100.900 4.200 2 1.300 1.400 2 3.100 2 5.100 0 1.600-.600 3.100-1.600 4.400-1 1.200-2.400 2.100-4 2.400-1.600.300-3.200.100-4.600-.700-1.400-.800-2.500-2-3.100-3.500C.900 9.200.800 7.500 1.300 6c.500-1.600 1.400-2.900 2.800-3.800C5.400 1.300 7 .900 8.600 1zm.500 12.900c1.300-.300 2.500-1 3.400-2.100.800-1.100 1.300-2.400 1.200-3.800 0-1.600-.600-3.200-1.700-4.300-1-1-2.200-1.600-3.600-1.700-1.300-.100-2.700.200-3.800 1-1.100.800-1.900 1.900-2.300 3.300-.400 1.300-.400 2.700.200 4 .600 1.300 1.500 2.300 2.700 3 1.200.700 2.600.900 3.900.600zM7.900 7.500L10.300 5l.700.700-2.400 2.500 2.400 2.500-.700.700-2.400-2.500-2.400 2.500-.700-.700 2.400-2.500-2.400-2.500.700-.700 2.400 2.500z"/></svg>
<svg style="left:208px;top:980.3px" width="20.5" height="20.5" viewBox="0 0 16 16" fill="#ffffff"><path d="M7.560 1h.880l6.540 12.260-.440.740H1.440L1 13.260 7.560 1zM8 2.280L2.280 13H13.700L8 2.280zM8.625 12v-1h-1.250v1h1.250zm-1.250-2V6h1.250v4h-1.250z"/></svg>
<svg style="left:1864.2px;top:979.5px" width="20.5" height="20.5" viewBox="0 0 16 16" fill="#ffffff"><path d="M13.377 10.573a7.630 7.630 0 0 1-.383-2.380V6.195a5.115 5.115 0 0 0-1.268-3.446 5.138 5.138 0 0 0-3.242-1.722c-.694-.072-1.400 0-2.070.227-.670.215-1.280.574-1.794 1.053a4.923 4.923 0 0 0-1.208 1.675 5.067 5.067 0 0 0-.431 2.022v2.200a7.610 7.610 0 0 1-.383 2.370L2 12.343l.479.658h3.505c0 .526.215 1.040.586 1.412.370.370.885.586 1.412.586.526 0 1.040-.215 1.411-.586s.587-.886.587-1.412h3.505l.478-.658-.586-1.770zm-4.690 3.147a.997.997 0 0 1-.705.299.997.997 0 0 1-.706-.300.997.997 0 0 1-.300-.705h1.999a.939.939 0 0 1-.287.706zm-5.515-1.710l.371-1.114a8.633 8.633 0 0 0 .443-2.691V6.004c0-.563.120-1.113.347-1.616.227-.514.550-.969.969-1.340.419-.382.910-.670 1.436-.837.538-.180 1.100-.240 1.650-.180a4.147 4.147 0 0 1 2.597 1.400 4.133 4.133 0 0 1 1.004 2.776v2.010c0 .909.144 1.818.443 2.691l.371 1.113h-9.630v-.012z"/></svg>
<span class="t" style="left:36.0px;top:980.9px;font-size:16.5px;line-height:21px;color:#ffffff;letter-spacing:0.78px;-webkit-text-stroke:0.3px #007acc;">master*</span>
<span class="t" style="left:192.5px;top:980.9px;font-size:16.5px;line-height:21px;color:#ffffff;letter-spacing:2.81px;-webkit-text-stroke:0.3px #007acc;">0</span>
<span class="t" style="left:233.5px;top:980.9px;font-size:16.5px;line-height:21px;color:#ffffff;letter-spacing:1.81px;-webkit-text-stroke:0.3px #007acc;">0</span>
<span class="t" style="left:1262.5px;top:980.9px;font-size:16.5px;line-height:21px;color:#ffffff;letter-spacing:0.45px;-webkit-text-stroke:0.3px #007acc;">Ln 29, Col 17</span>
<span class="t" style="left:1389.5px;top:980.9px;font-size:16.5px;line-height:21px;color:#ffffff;letter-spacing:0.18px;-webkit-text-stroke:0.3px #007acc;">Spaces: 2</span>
<span class="t" style="left:1488.5px;top:980.9px;font-size:16.5px;line-height:21px;color:#ffffff;letter-spacing:0.05px;-webkit-text-stroke:0.3px #007acc;">UTF-8</span>
<span class="t" style="left:1558.5px;top:980.9px;font-size:16.5px;line-height:21px;color:#ffffff;letter-spacing:-0.13px;-webkit-text-stroke:0.3px #007acc;">LF</span>
<span class="t" style="left:1604.0px;top:980.4px;font-size:16.5px;line-height:21px;color:#ffffff;letter-spacing:1.98px;-webkit-text-stroke:0.3px #007acc;opacity:.9;">{}</span>
<span class="t" style="left:1629.5px;top:980.9px;font-size:16.5px;line-height:21px;color:#ffffff;letter-spacing:0.50px;-webkit-text-stroke:0.3px #007acc;">TypeScript</span>
<span class="t" style="left:1762.5px;top:980.9px;font-size:16.5px;line-height:21px;color:#ffffff;letter-spacing:1.16px;-webkit-text-stroke:0.3px #007acc;">[off]</span>
<svg style="left:1730px;top:974px" width="170" height="33" viewBox="0 0 170 33" fill="none" stroke="#ffffff" stroke-width="1.500" stroke-linecap="round" stroke-linejoin="round">
<path d="M8 17 C10.500 11 23.500 11 26 17"/><circle cx="17" cy="19.500" r="4"/>
<path d="M97 9 H110 V18 H106 L103.500 20.500 V18"/><circle cx="97" cy="16.500" r="3.200"/><path d="M91 26 C92 20.500 102 20.500 103 26"/>
</svg>
<div class="abs" style="left:1475px;top:956px;width:77px;height:55px;border:4px solid #ed1c24"></div>
<div class="abs" style="left:127px;top:1014px;width:45px;height:1px;background:#3c3c3c;"></div>
<div class="abs" style="left:176px;top:1014px;width:2px;height:1px;background:#3c3c3c;"></div>
</body></html>
